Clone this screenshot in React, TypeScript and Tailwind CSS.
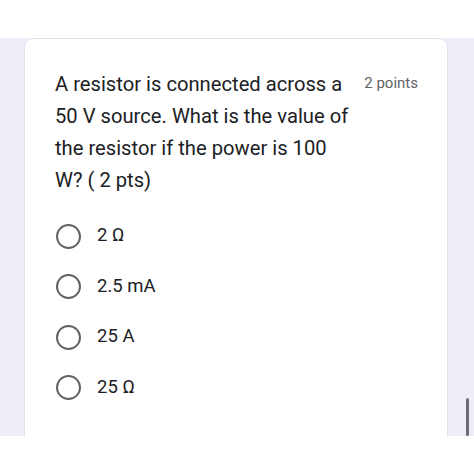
const options = ["2 Ω", "2.5 mA", "25 A", "25 Ω"];

export default function App() {
  return (
    <div className="relative h-[474px] w-[474px] overflow-hidden bg-white pt-[38px] font-['Roboto',sans-serif]">
      <div className="h-[398px] bg-[#efedf7] pl-[24px] pr-[26px]">
        <div className="h-full rounded-t-[9px] border border-b-0 border-[#e3e1ea] bg-white pl-[30px] pr-[29px] pt-[29px]">
          <div className="flex items-start justify-between">
            <p className="w-[296px] text-[20.2px] leading-[32px] text-[#202124]">
              A resistor is connected across a 50 V source. What is the value of the resistor if the power is 100 W? ( 2 pts)
            </p>
            <span className="pt-[5px] text-[15px] leading-[20px] text-[#5f6368]">2 points</span>
          </div>

          <div className="mt-[15px] flex flex-col">
            {options.map((opt) => (
              <label key={opt} className="flex h-[50.5px] items-center gap-[16px]">
                <span className="ml-[1px] h-[25px] w-[25px] rounded-full border-[2.5px] border-[#5f6368]" />
                <span className="text-[18.5px] text-[#202124]">{opt}</span>
              </label>
            ))}
          </div>
        </div>
      </div>

      <div className="absolute left-[466px] top-[398px] h-[38px] w-[3px] rounded-full bg-[#6e6e72]" />
    </div>
  );
}
